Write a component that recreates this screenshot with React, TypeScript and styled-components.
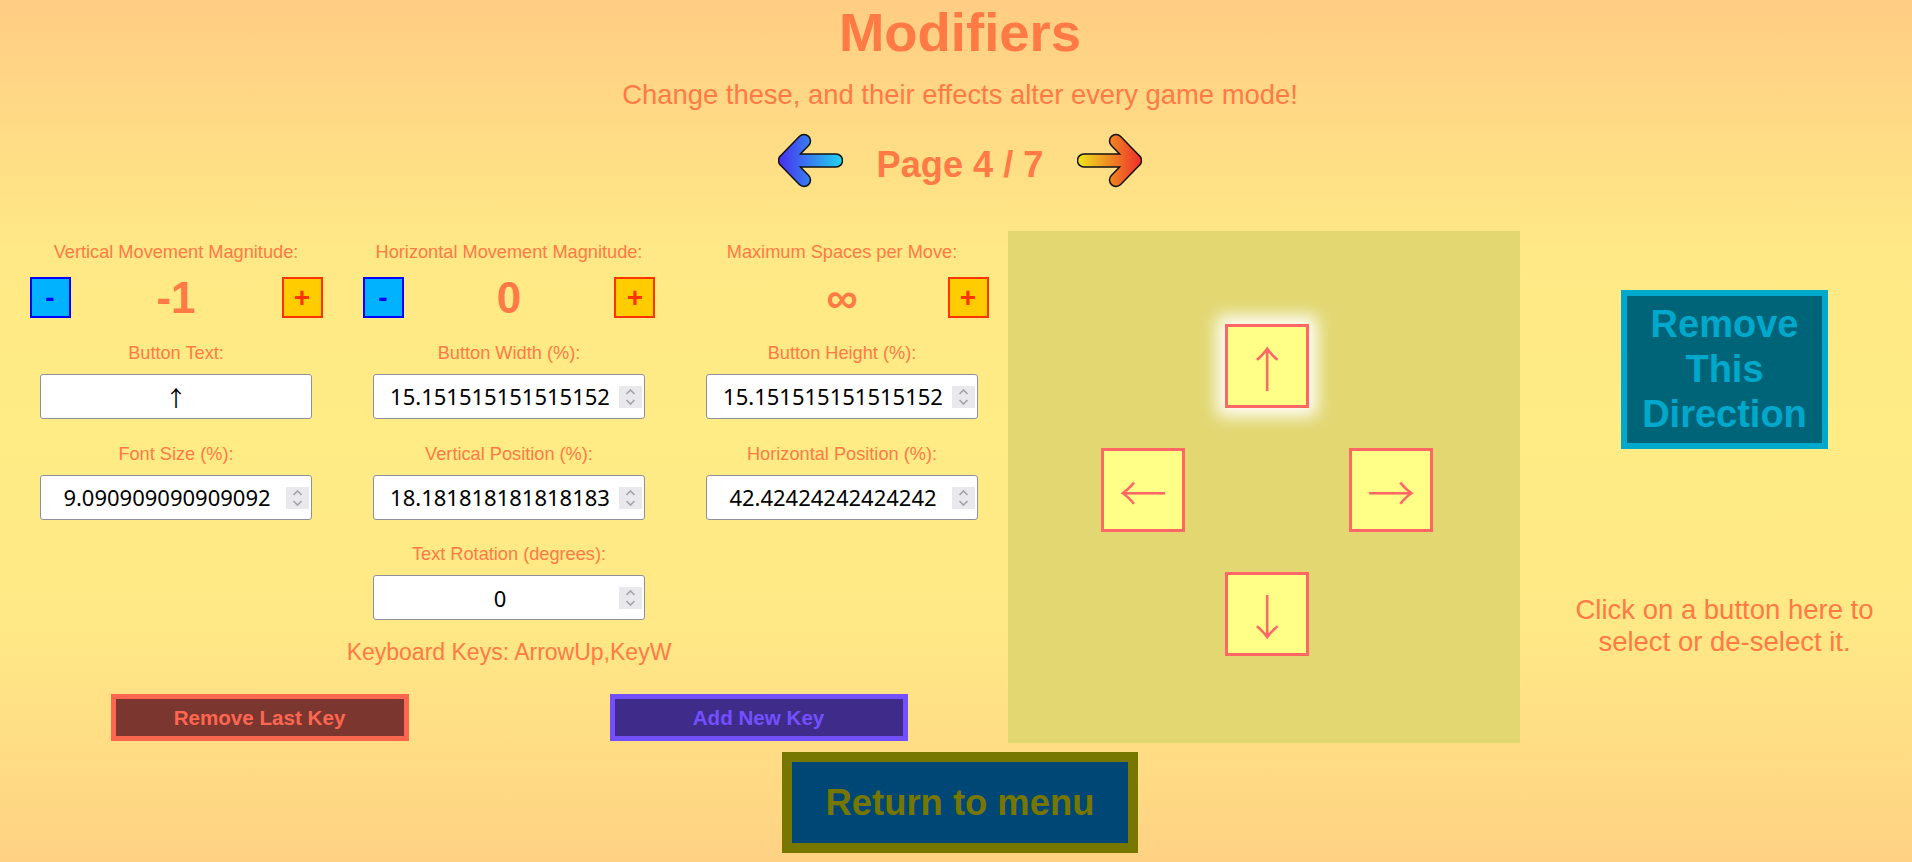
import styled, { createGlobalStyle } from 'styled-components';

const coral = '#ff7a45';

const GlobalStyle = createGlobalStyle`
    html, body {
        margin: 0;
        padding: 0;
        overflow: hidden;
    }
    body {
        font-family: 'Liberation Sans', Arial, sans-serif;
    }
`;

const Page = styled.div`
    width: 1920px;
    height: 862px;
    display: flex;
    flex-direction: column;
    align-items: center;
    background: linear-gradient(to bottom, #ffcd84 0%, #ffe986 30%, #ffec85 50%, #ffe986 72%, #ffd283 100%);
    color: ${coral};
`;

const Title = styled.h1`
    margin: 0;
    font-size: 54.5px;
    line-height: 66px;
    font-weight: bold;
`;

const Subtitle = styled.p`
    margin: 13px 0 0;
    font-size: 27.4px;
    line-height: 32px;
`;

const Pager = styled.div`
    margin-top: 22px;
    height: 55px;
    display: flex;
    align-items: center;
    gap: 34px;
`;

const PageLabel = styled.span`
    font-size: 36.2px;
    font-weight: bold;
    line-height: 42px;
    margin-top: 8px;
`;

const ArrowSvg = styled.svg<{ $flip?: boolean }>`
    width: 65px;
    height: 55px;
    display: block;
    transform: ${({ $flip }) => ($flip ? 'scaleX(-1)' : 'none')};
`;

const PageArrow = ({ id, tip, tail, flip }: { id: string; tip: string; tail: string; flip?: boolean }) => (
    <ArrowSvg viewBox='0 0 65 55' $flip={flip}>
        <defs>
            <linearGradient id={id} gradientUnits='userSpaceOnUse' x1='0' y1='0' x2='65' y2='0'>
                <stop offset='0' stopColor={tip} />
                <stop offset='1' stopColor={tail} />
            </linearGradient>
        </defs>
        <g fill='none' strokeLinecap='round' strokeLinejoin='round'>
            <path d='M58 27.5H7M26 8L7 27.5L26 47' stroke='#111' strokeWidth='14.5' />
            <path d='M58 27.5H7M26 8L7 27.5L26 47' stroke={`url(#${id})`} strokeWidth='11.5' />
        </g>
    </ArrowSvg>
);

const Workspace = styled.div`
    margin-top: 43px;
    width: 100%;
    display: flex;
    align-items: flex-start;
`;

const ControlPanel = styled.div`
    width: 1008px;
    flex: none;
`;

const FieldGrid = styled.div`
    padding: 11px 0 0 9.5px;
    display: grid;
    grid-template-columns: repeat(3, 333px);
    row-gap: 24.75px;
`;

const Field = styled.div<{ $column?: number }>`
    display: flex;
    flex-direction: column;
    align-items: center;
    gap: 10px;
    grid-column: ${({ $column }) => $column ?? 'auto'};
`;

const StepperField = styled(Field)`
    gap: 14px;
`;

const FieldLabel = styled.label`
    font-size: 18.2px;
    line-height: 21px;
    white-space: nowrap;
`;

const Stepper = styled.div`
    width: 293px;
    height: 41px;
    display: flex;
    align-items: center;
    justify-content: space-between;
`;

const StepButton = styled.button<{ $kind: 'minus' | 'plus'; $hidden?: boolean }>`
    width: 41px;
    height: 41px;
    padding: 0;
    box-sizing: border-box;
    border: 2px solid ${({ $kind }) => ($kind === 'minus' ? '#0000ff' : '#ff3300')};
    background: ${({ $kind }) => ($kind === 'minus' ? '#00b2ff' : '#ffcc00')};
    color: ${({ $kind }) => ($kind === 'minus' ? '#0000ff' : '#ff3300')};
    font-family: inherit;
    font-size: 28px;
    font-weight: bold;
    visibility: ${({ $hidden }) => ($hidden ? 'hidden' : 'visible')};
`;

const StepValue = styled.span`
    font-size: 44px;
    font-weight: bold;
    line-height: 41px;
`;

const InputBox = styled.div`
    position: relative;
    width: 272px;
    height: 45px;
`;

const TextBox = styled.input<{ $spin?: boolean }>`
    width: 100%;
    height: 100%;
    box-sizing: border-box;
    padding: 1px ${({ $spin }) => ($spin ? '24px' : '2px')} 1px ${({ $spin }) => ($spin ? '6px' : '2px')};
    border: 1px solid #8f8f9d;
    border-radius: 3px;
    background: #ffffff;
    color: #000000;
    font-family: 'Noto Sans', 'Noto Sans CJK SC', sans-serif;
    font-size: 22px;
    text-align: center;
    outline: none;
    appearance: textfield;

    &::-webkit-inner-spin-button {
        display: none;
    }
`;

const SpinBadge = styled.svg`
    position: absolute;
    top: 12px;
    right: 3px;
    width: 23px;
    height: 22px;
    background: #e9e9ed;
`;

const SpinArrows = () => (
    <SpinBadge viewBox='0 0 23 22'>
        <path d='M7.5 8L11.5 4L15.5 8M7.5 14L11.5 18L15.5 14' fill='none' stroke='#a3a3ab' strokeWidth='1.6' />
    </SpinBadge>
);

const KeyList = styled.div`
    margin-top: 19px;
    padding-left: 10px;
    text-align: center;
    font-size: 23px;
    line-height: 27px;
`;

const KeyActions = styled.div`
    margin-top: 28px;
    padding-left: 10px;
    display: grid;
    grid-template-columns: 1fr 1fr;
    justify-items: center;
`;

const KeyButton = styled.button<{ $accent: string; $fill: string }>`
    width: 298px;
    height: 47px;
    box-sizing: border-box;
    border: 5px solid ${({ $accent }) => $accent};
    background: ${({ $fill }) => $fill};
    color: ${({ $accent }) => $accent};
    font-family: inherit;
    font-size: 20.6px;
    font-weight: bold;
`;

const Board = styled.div`
    position: relative;
    flex: none;
    width: 512px;
    height: 512px;
    background: #e2d771;
`;

const BoardButton = styled.button<{ $top: number; $left: number; $selected?: boolean }>`
    position: absolute;
    top: ${({ $top }) => $top}%;
    left: ${({ $left }) => $left}%;
    width: 84px;
    height: 84px;
    box-sizing: border-box;
    padding: 0;
    border: 3px solid #ff6666;
    background: #ffff88;
    color: #ff6666;
    font-family: 'Noto Sans CJK SC', sans-serif;
    font-size: 48px;
    font-weight: 300;
    box-shadow: ${({ $selected }) => ($selected ? '0 0 16px 8px #ffffff' : 'none')};
`;

const SidePanel = styled.div`
    width: 400px;
    box-sizing: border-box;
    padding: 59px 0 0 9px;
    display: flex;
    flex-direction: column;
    align-items: center;
`;

const RemoveDirection = styled.button`
    width: 207px;
    height: 159px;
    box-sizing: border-box;
    padding: 0;
    border: 6px solid #00a8cc;
    background: #006478;
    color: #00a8cc;
    font-family: inherit;
    font-size: 38px;
    font-weight: bold;
    line-height: 45px;
`;

const Hint = styled.p`
    margin: 145px 0 0;
    width: 340px;
    text-align: center;
    font-size: 27.5px;
    line-height: 32px;
`;

const ReturnButton = styled.button`
    margin-top: 9px;
    width: 356px;
    height: 101px;
    box-sizing: border-box;
    border: 10px solid #777700;
    background: #004775;
    color: #777700;
    font-family: inherit;
    font-size: 36.4px;
    font-weight: bold;
`;

const steppers = [
    { label: 'Vertical Movement Magnitude:', value: '-1' },
    { label: 'Horizontal Movement Magnitude:', value: '0' },
    { label: 'Maximum Spaces per Move:', value: '∞', noMinus: true },
];

const inputs = [
    { label: 'Button Text:', value: '↑', type: 'text' },
    { label: 'Button Width (%):', value: '15.151515151515152', type: 'number' },
    { label: 'Button Height (%):', value: '15.151515151515152', type: 'number' },
    { label: 'Font Size (%):', value: '9.090909090909092', type: 'number' },
    { label: 'Vertical Position (%):', value: '18.181818181818183', type: 'number' },
    { label: 'Horizontal Position (%):', value: '42.42424242424242', type: 'number' },
];

const directions = [
    { glyph: '↑', top: 18.18, left: 42.42, selected: true },
    { glyph: '←', top: 42.42, left: 18.18 },
    { glyph: '→', top: 42.42, left: 66.67 },
    { glyph: '↓', top: 66.67, left: 42.42 },
];

const App = () => (
    <Page>
        <GlobalStyle />
        <Title>Modifiers</Title>
        <Subtitle>Change these, and their effects alter every game mode!</Subtitle>
        <Pager>
            <PageArrow id='prev-page' tip='#4a2cf0' tail='#22d5f0' />
            <PageLabel>Page 4 / 7</PageLabel>
            <PageArrow id='next-page' tip='#ef2a2a' tail='#efe81c' flip />
        </Pager>
        <Workspace>
            <ControlPanel>
                <FieldGrid>
                    {steppers.map(({ label, value, noMinus }) => (
                        <StepperField key={label}>
                            <FieldLabel>{label}</FieldLabel>
                            <Stepper>
                                <StepButton $kind='minus' $hidden={noMinus}>-</StepButton>
                                <StepValue>{value}</StepValue>
                                <StepButton $kind='plus'>+</StepButton>
                            </Stepper>
                        </StepperField>
                    ))}
                    {inputs.map(({ label, value, type }) => (
                        <Field key={label}>
                            <FieldLabel>{label}</FieldLabel>
                            <InputBox>
                                <TextBox type={type} defaultValue={value} $spin={type === 'number'} />
                                {type === 'number' && <SpinArrows />}
                            </InputBox>
                        </Field>
                    ))}
                    <Field $column={2}>
                        <FieldLabel>Text Rotation (degrees):</FieldLabel>
                        <InputBox>
                            <TextBox type='number' defaultValue='0' $spin />
                            <SpinArrows />
                        </InputBox>
                    </Field>
                </FieldGrid>
                <KeyList>Keyboard Keys: ArrowUp,KeyW</KeyList>
                <KeyActions>
                    <KeyButton $accent='#ff6650' $fill='#7a362f'>Remove Last Key</KeyButton>
                    <KeyButton $accent='#7350ff' $fill='#3f2c8a'>Add New Key</KeyButton>
                </KeyActions>
            </ControlPanel>
            <Board>
                {directions.map(({ glyph, top, left, selected }) => (
                    <BoardButton key={glyph} $top={top} $left={left} $selected={selected}>
                        {glyph}
                    </BoardButton>
                ))}
            </Board>
            <SidePanel>
                <RemoveDirection>Remove This Direction</RemoveDirection>
                <Hint>Click on a button here to select or de-select it.</Hint>
            </SidePanel>
        </Workspace>
        <ReturnButton>Return to menu</ReturnButton>
    </Page>
);

export default App;
